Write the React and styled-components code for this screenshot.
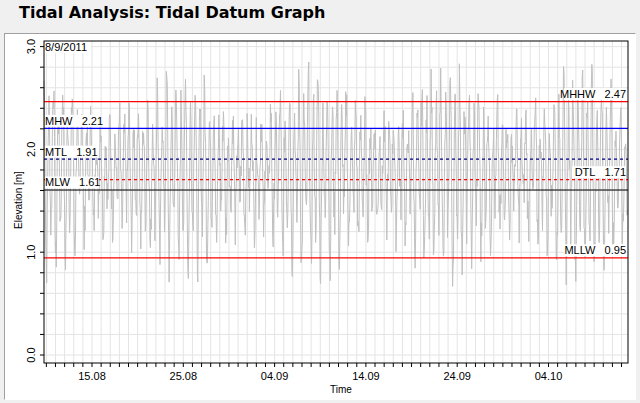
import React, { useMemo } from 'react';
import styled, { createGlobalStyle } from 'styled-components';

const Global = createGlobalStyle`
  body { margin: 0; background: #f0f0f0; font-family: "Liberation Sans", Arial, sans-serif; }
`;

const Page = styled.div`
  width: 640px;
  height: 403px;
  background: #f0f0f0;
  display: flex;
  flex-direction: column;
`;

const Title = styled.div`
  height: 33px;
  padding: 3px 0 0 19px;
  box-sizing: border-box;
  font-family: "DejaVu Sans", sans-serif;
  font-weight: bold;
  font-size: 16px;
  color: #000;
`;

const Panel = styled.div`
  margin: 0 4px 3px 4px;
  flex: 1;
  background: #fff;
  border: 1px solid #a0a0a0;
  border-right-color: #fff;
  border-bottom-color: #fff;
  overflow: hidden;
`;

// page coords offset: svg origin at (5,34)
const OX = 5, OY = 34;
const L = 44 - OX, R = 628 - OX, T = 41 - OY, B = 363 - OY;
const yv = v => 355 - OY - 102.8 * v;
const X15 = 92 - OX;
const DAY = 9.13;

const datums = [
  { name: 'MHHW', v: 2.47, color: '#ff0000', right: true },
  { name: 'MHW', v: 2.21, color: '#0000ff' },
  { name: 'MTL', v: 1.91, color: '#000080', dash: true },
  { name: 'DTL', v: 1.71, color: '#ff0000', dash: true, right: true },
  { name: 'MLW', v: 1.61, color: '#000000' },
  { name: 'MLLW', v: 0.95, color: '#ff0000', right: true },
];

const Chart = () => {
  const path = useMemo(() => {
    let seed = 7;
    const rnd = () => { seed = (seed * 9301 + 49297) % 233280; return seed / 233280; };
    const pts = [];
    const days = (R - L) / DAY;
    for (let h = 0; h <= days * 24; h += 1.2) {
      const d = h / 24;
      const spring = 0.8 + 0.25 * Math.cos((2 * Math.PI * d) / 14.77);
      const semi = Math.cos((2 * Math.PI * h) / 12.42);
      const diur = 0.35 * Math.cos((2 * Math.PI * h) / 24.84 + 1);
      const v = 1.8 + spring * (0.7 * semi + diur * 0.7) + (rnd() - 0.5) * 0.5;
      const x = L + d * DAY;
      pts.push(`${x.toFixed(1)},${yv(Math.max(0.5, Math.min(2.85, v))).toFixed(1)}`);
    }
    return 'M' + pts.join('L');
  }, []);

  const vgrid = [];
  for (let x = X15 - 5 * DAY; x < R; x += DAY) if (x > L) vgrid.push(x);
  const hgrid = [];
  for (let v = 0; v <= 3.01; v += 0.2) hgrid.push(v);
  const labels = ['15.08', '25.08', '04.09', '14.09', '24.09', '04.10'];

  return (
    <svg width="631" height="367" style={{ display: 'block' }} fontFamily="Liberation Sans, Arial, sans-serif" fontSize="11">
      {vgrid.map((x, i) => <line key={'v' + i} x1={x} x2={x} y1={T} y2={B} stroke="#e4e4e4" />)}
      {hgrid.map((v, i) => <line key={'h' + i} x1={L} x2={R} y1={yv(v)} y2={yv(v)} stroke="#e4e4e4" />)}
      <path d={path} fill="none" stroke="#c0c0c0" strokeWidth="1" />
      {datums.map(d => {
        const label = `${d.name}\u00a0\u00a0\u00a0${d.v.toFixed(2)}`;
        const w = d.name.length * 8 + 30;
        return (
          <g key={d.name}>
            <line x1={L} x2={R} y1={yv(d.v) + 0.5} y2={yv(d.v) + 0.5} stroke={d.color} strokeWidth="1.2" strokeDasharray={d.dash ? '3 3' : undefined} />
            <rect x={d.right ? R - 2 - w : L + 1} y={yv(d.v) - 13} width={w} height={12} fill="#fff" />
            <text x={d.right ? R - 2 : L + 1} y={yv(d.v) - 3} textAnchor={d.right ? 'end' : 'start'} fill="#000">{label}</text>
          </g>
        );
      })}
      <rect x={L + 1} y={T + 1} width={46} height={11} fill="#fff" />
      <text x={L + 1} y={T + 10}>8/9/2011</text>
      <rect x={L} y={T} width={R - L} height={B - T} fill="none" stroke="#000" />
      {hgrid.map((v, i) => <line key={'yt' + i} x1={L - 4} x2={L} y1={yv(v)} y2={yv(v)} stroke="#000" />)}
      {[0, 1, 2, 3].map(v => (
        <text key={v} transform={`translate(${L - 9},${yv(v)}) rotate(-90)`} textAnchor="middle" fontSize="11">{v.toFixed(1)}</text>
      ))}
      <text transform={`translate(${22 - OX},${200 - OY}) rotate(-90)`} textAnchor="middle" fontSize="10">Elevation [m]</text>
      {vgrid.map((x, i) => <line key={'xt' + i} x1={x} x2={x} y1={B} y2={B + 4} stroke="#000" />)}
      {labels.map((s, i) => (
        <text key={s} x={X15 + i * 10 * DAY} y={B + 17} textAnchor="middle">{s}</text>
      ))}
      <text x={(L + R) / 2 + 5} y={B + 30} textAnchor="middle" fontSize="10">Time</text>
    </svg>
  );
};

export default function App() {
  return (
    <Page>
      <Global />
      <Title>Tidal Analysis: Tidal Datum Graph</Title>
      <Panel>
        <Chart />
      </Panel>
    </Page>
  );
}
